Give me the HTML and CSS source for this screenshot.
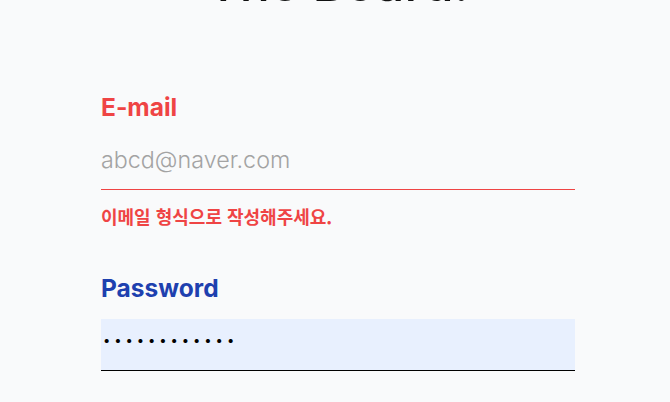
FILE: index.html
```html
<!DOCTYPE html>
<html lang="ko">
<head>
<meta charset="utf-8">
<title>The Board.</title>
<link rel="stylesheet" href="styles.css">
</head>
<body>
<main class="page">
  <h1 class="title">The Board.</h1>
  <form class="form">
    <div class="field">
      <label class="label label-error" for="email">E-mail</label>
      <div class="control control-error">
        <input class="input" id="email" type="text" placeholder="abcd@naver.com">
      </div>
      <p class="error">이메일 형식으로 작성해주세요.</p>
    </div>
    <div class="field">
      <label class="label label-focus" for="pw">Password</label>
      <div class="control control-filled">
        <input class="input input-password" id="pw" type="password" value="abcdefghijkl">
      </div>
    </div>
  </form>
</main>
</body>
</html>
```

FILE: styles.css
```css
html, body {
  margin: 0;
  padding: 0;
  background: #f9fafb;
}
body {
  font-family: Inter, "Noto Sans CJK KR", sans-serif;
  overflow: hidden;
}
.page {
  width: 474px;
  margin: 0 0 0 101px;
}
.title {
  margin: -47px 0 0;
  font-size: 50px;
  line-height: 60px;
  font-weight: 500;
  text-align: center;
  color: #111;
}
.form {
  display: flex;
  flex-direction: column;
  gap: 44px;
  margin-top: 79px;
}
.field {
  display: flex;
  flex-direction: column;
}
.label {
  font-size: 24.5px;
  font-weight: 700;
  line-height: 30px;
}
.label-error { color: #ef4444; }
.label-focus { color: #1e40af; }
.control {
  margin-top: 16px;
  height: 52px;
  box-sizing: border-box;
  border-bottom: 1px solid #000;
  display: flex;
}
.control-error { border-bottom-color: #ef4444; }
.control-filled { background: #e8f0fe; }
.input {
  flex: 1;
  min-width: 0;
  margin: 0;
  padding: 0 2px 8px 0;
  border: 0;
  background: transparent;
  font-family: Inter, sans-serif;
  font-size: 23.3px;
  font-weight: 300;
  color: #000;
  outline: none;
}
.input::placeholder {
  color: #a3a3a3;
  font-weight: 300;
}
.input-password {
  padding: 0 2px 9px 2px;
  font-size: 13px;
  font-weight: 400;
  letter-spacing: 3.95px;
}
.error {
  margin: 13px 0 0;
  font-family: "Noto Sans CJK KR", sans-serif;
  font-size: 18px;
  line-height: 26px;
  font-weight: 700;
  color: #ef4444;
}
```
